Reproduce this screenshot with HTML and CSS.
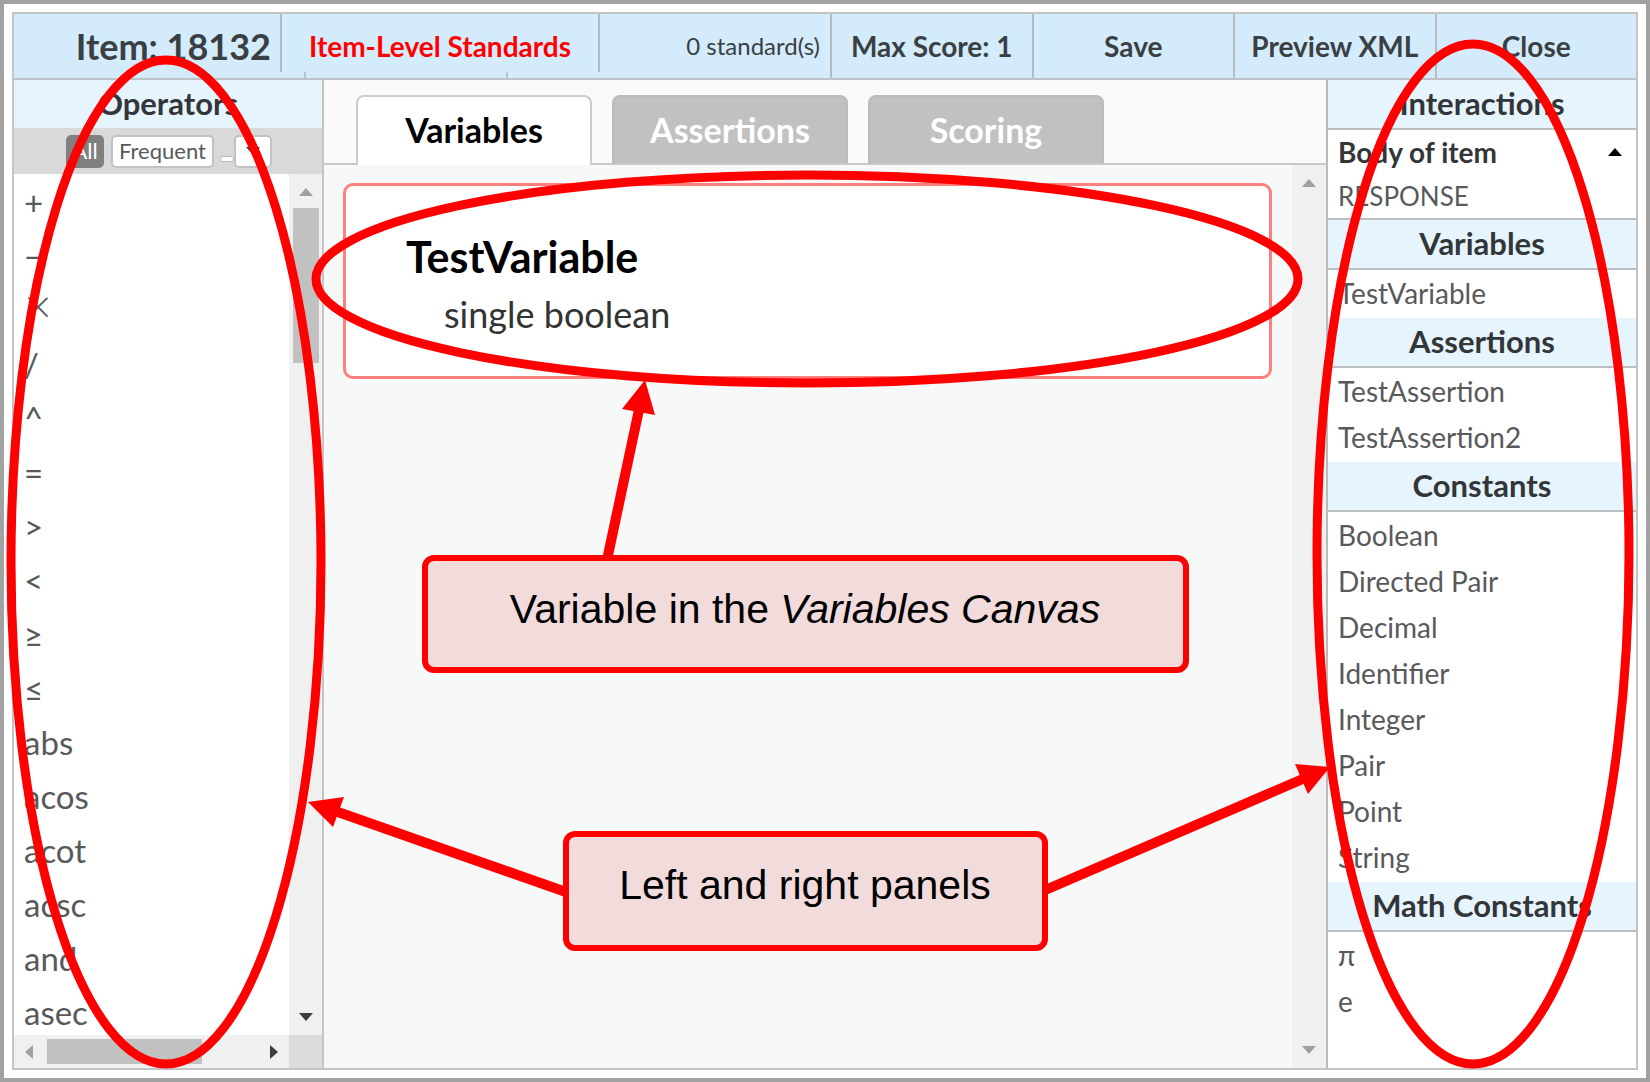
FILE: index.html
```
<!DOCTYPE html>
<html lang="en">
    <head>
        <meta charset="utf-8" />
        <meta name="viewport" content="width=device-width, initial-scale=1" />
        <title>Item: 18132</title>
        <link rel="stylesheet" href="styles.css">
    </head>
    <body>
        <div id="window">
            <div id="app">

                <!-- top bar -->
                <div id="header">
                    <h1 class="cell itemId">Item: 18132</h1>
                    <a class="cell standards" href="#standards">Item-Level Standards</a>
                    <span class="cell count">0 standard(s)</span>
                    <button class="cell" type="button">Max Score: 1</button>
                    <button class="cell" type="button">Save</button>
                    <button class="cell" type="button">Preview XML</button>
                    <button class="cell" type="button">Close</button>
                </div>

                <div id="main">

                    <!-- operators -->
                    <div id="left">
                        <h2 class="panelTitle">Operators</h2>
                        <div class="filters">
                            <button class="filter on" type="button">All</button>
                            <button class="filter frequent" type="button">Frequent</button>
                            <span class="dash"></span>
                            <button class="filter more" type="button" aria-label="more"><i class="arrow down"></i></button>
                        </div>
                        <div class="scroller">
                            <ul class="operators">
                                <li>+</li>
                                <li>−</li>
                                <li class="times">×</li>
                                <li>/</li>
                                <li>^</li>
                                <li>=</li>
                                <li>&gt;</li>
                                <li>&lt;</li>
                                <li>≥</li>
                                <li>≤</li>
                                <li>abs</li>
                                <li>acos</li>
                                <li>acot</li>
                                <li>acsc</li>
                                <li>and</li>
                                <li>asec</li>
                            </ul>
                            <div class="vbar"><i class="arrow up dim"></i><i class="thumb"></i><i class="arrow down"></i></div>
                            <div class="hbar"><i class="arrow left dim"></i><i class="thumb"></i><i class="arrow right"></i></div>
                            <div class="corner"></div>
                        </div>
                    </div>

                    <!-- canvas -->
                    <div id="center">
                        <div class="tabs">
                            <button class="tab on" type="button">Variables</button>
                            <button class="tab" type="button">Assertions</button>
                            <button class="tab" type="button">Scoring</button>
                        </div>
                        <div class="canvas">
                            <div class="canvasBody">
                                <div class="variable">
                                    <h3>TestVariable</h3>
                                    <p>single boolean</p>
                                </div>
                            </div>
                            <div class="vbar"><i class="arrow up dim"></i><i class="arrow down dim"></i></div>
                        </div>
                    </div>

                    <!-- references -->
                    <div id="right">
                        <h2 class="panelTitle ruled">Interactions</h2>
                        <ul class="refs interactions">
                            <li class="group">Body of item <i class="arrow up"></i></li>
                            <li class="response">RESPONSE</li>
                        </ul>
                        <h2 class="panelTitle ruled">Variables</h2>
                        <ul class="refs">
                            <li>TestVariable</li>
                        </ul>
                        <h2 class="panelTitle ruled">Assertions</h2>
                        <ul class="refs">
                            <li>TestAssertion</li>
                            <li>TestAssertion2</li>
                        </ul>
                        <h2 class="panelTitle ruled">Constants</h2>
                        <ul class="refs">
                            <li>Boolean</li>
                            <li>Directed Pair</li>
                            <li>Decimal</li>
                            <li>Identifier</li>
                            <li>Integer</li>
                            <li>Pair</li>
                            <li>Point</li>
                            <li>String</li>
                        </ul>
                        <h2 class="panelTitle ruled">Math Constants</h2>
                        <ul class="refs">
                            <li>π</li>
                            <li>e</li>
                        </ul>
                    </div>
                </div>
            </div>

            <!-- callouts, drawn over everything -->
            <svg id="callouts" viewBox="0 0 1650 1082">
                <g class="ring">
                    <ellipse cx="166" cy="562" rx="155" ry="502" />
                    <ellipse cx="807" cy="279" rx="491" ry="104" />
                    <ellipse cx="1473" cy="554" rx="156" ry="510" />
                </g>
                <g class="stem">
                    <path d="M607 560L640 405" />
                    <path d="M566 892L335 811" />
                    <path d="M1043 891L1305 778" />
                </g>
                <g class="head">
                    <path d="M645 380L622 409L655 415Z" />
                    <path d="M308 802L344 797L333 827Z" />
                    <path d="M1330 767L1295 764L1308 794Z" />
                </g>
                <rect class="box" x="425" y="558" width="761" height="112" rx="9" />
                <text x="805" y="623">Variable in the <tspan class="em">Variables Canvas</tspan></text>
                <rect class="box" x="566" y="834" width="479" height="114" rx="9" />
                <text x="805" y="899">Left and right panels</text>
            </svg>
        </div>
    </body>
</html>
```

FILE: styles.css
```
/* body props */
* {
    box-sizing:         border-box;
}
body {
    margin:             0;
    background-color:   #FFFFFF;
    color:              #58595A;
    font-family:        Lato, "Open Sans", sans-serif;
    font-size:          28px;
}
h1, h2, h3, p, ul {
    margin:             0;
    padding:            0;
}
ul {
    list-style:         none;
}
button {
    margin:             0;
    padding:            0;
    border:             0;
    font:               inherit;
    color:              inherit;
    cursor:             pointer;
}
#window {
    position:           relative;
    display:            flex;
    height:             100vh;
    padding:            8px;
    border:             4px solid #A2A2A2;
}
#app {
    flex:               1;
    display:            flex;
    flex-direction:     column;
    border:             2px solid #C4C4C4;
}

/* top bar */
#header {
    position:           relative;
    flex:               none;
    display:            grid;
    grid-template-columns: 266px 318px 232px repeat(4, 1fr);
    height:             66px;
    background-color:   #D3EBFB;
    border-bottom:      2px solid #BDC3C8;
}
#header::before, #header::after {
    content:            "";
    position:           absolute;
    bottom:             0;
    left:               290px;
    width:              2px;
    height:             6px;
    background-color:   #BDC3C8;
}
#header::after {
    left:               492px;
}
.cell {
    display:            flex;
    align-items:        center;
    justify-content:    center;
    background:         none;
    border-left:        2px solid #B4BCC2;
    color:              #3A3F44;
    font-size:          28px;
    font-weight:        bold;
    line-height:        32px;
    white-space:        nowrap;
}
.itemId {
    justify-content:    flex-end;
    padding-right:      9px;
    border-left:        0;
    font-size:          36px;
}
.standards {
    margin-bottom:      6px;
    padding-top:        6px;
    color:              #FF0000;
    text-decoration:    none;
}
.count {
    justify-content:    flex-end;
    margin-bottom:      6px;
    padding:            6px 10px 0 0;
    font-size:          24px;
    font-weight:        normal;
}

/* columns */
#main {
    flex:               1;
    display:            grid;
    grid-template-columns: 310px 1fr 310px;
    grid-template-rows: minmax(0, 1fr);
    min-height:         0;
}
#left {
    display:            flex;
    flex-direction:     column;
    border-right:       2px solid #C4C4C4;
}
#right {
    border-left:        2px solid #BBBBBB;
}
.panelTitle {
    flex:               none;
    height:             48px;
    background-color:   #E6F4FD;
    color:              #333638;
    font-size:          31px;
    line-height:        46px;
    text-align:         center;
}
.panelTitle.ruled {
    height:             50px;
    border-bottom:      2px solid #BBBFC2;
}

/* operator filters */
.filters {
    flex:               none;
    display:            flex;
    align-items:        center;
    height:             46px;
    padding-left:       52px;
    background-color:   #D9D9D9;
}
.filter {
    height:             33px;
    border:             2px solid #C2C2C2;
    border-radius:      5px;
    background-color:   #FFFFFF;
    font-size:          22px;
    line-height:        28px;
}
.filter.on {
    width:              38px;
    margin-right:       7px;
    border-color:       #808080;
    background-color:   #808080;
    color:              #FFFFFF;
}
.filter.frequent {
    width:              103px;
}
.dash {
    width:              14px;
    height:             6px;
    margin:             16px 0 0 6px;
    border:             1px solid #BBBBBB;
    border-radius:      3px;
    background-color:   #FFFFFF;
}
.filter.more {
    display:            flex;
    align-items:        center;
    justify-content:    center;
    width:              38px;
}

/* scroll bars */
.scroller {
    flex:               1;
    display:            grid;
    grid-template-columns: 1fr 33px;
    grid-template-rows: minmax(0, 1fr) 33px;
    min-height:         0;
}
.vbar, .hbar {
    display:            flex;
    align-items:        center;
    background-color:   #F0F0F0;
}
.vbar {
    flex-direction:     column;
    padding:            14px 0;
}
.hbar {
    padding:            0 11px;
}
.vbar .arrow:last-child {
    margin-top:         auto;
}
.hbar .arrow:last-child {
    margin-left:        auto;
}
.vbar .thumb {
    width:              26px;
    height:             155px;
    margin-top:         12px;
    background-color:   #C1C1C1;
}
.hbar .thumb {
    width:              155px;
    height:             25px;
    margin-left:        14px;
    background-color:   #C1C1C1;
}
.corner {
    background-color:   #DCDCDC;
}
.arrow {
    width:              0;
    height:             0;
    border:             7px solid transparent;
    color:              #3C3C3C;
}
.arrow.dim {
    color:              #A0A0A0;
}
.arrow.up {
    border-top:         0;
    border-bottom:      8px solid;
}
.arrow.down {
    border-bottom:      0;
    border-top:         8px solid;
}
.arrow.left {
    border-left:        0;
    border-right:       8px solid;
}
.arrow.right {
    border-right:       0;
    border-left:        8px solid;
}

.operators {
    overflow:           hidden;
}
.operators li {
    height:             54px;
    padding-left:       10px;
    font-size:          33px;
    line-height:        56px;
}
.operators .times {
    font-size:          48px;
    font-weight:        300;
    line-height:        46px;
}

/* tabs and canvas */
#center {
    display:            flex;
    flex-direction:     column;
    background-color:   #F7F8F8;
}
.tabs {
    display:            flex;
    gap:                20px;
    height:             85px;
    padding:            15px 32px 0;
    background-color:   #FAFAFA;
    border-bottom:      2px solid #C8C8C8;
}
.tab {
    width:              236px;
    height:             68px;
    padding-bottom:     2px;
    border:             2px solid #BBBBBB;
    border-bottom:      0;
    border-radius:      8px 8px 0 0;
    background-color:   #C1C1C1;
    color:              #FFFFFF;
    font-size:          34px;
    font-weight:        bold;
}
.tab.on {
    height:             70px;
    padding-bottom:     4px;
    border-color:       #CCCCCC;
    background-color:   #FFFFFF;
    color:              #000000;
}
.canvas {
    flex:               1;
    display:            flex;
}
.canvasBody {
    flex:               1;
    padding:            18px 20px 0 19px;
}
.canvas .vbar {
    width:              34px;
}
.variable {
    height:             196px;
    padding:            48px 60px;
    border:             3px solid #FF7F7F;
    border-radius:      10px;
    background-color:   #FFFFFF;
}
.variable h3 {
    color:              #000000;
    font-size:          43px;
    line-height:        46px;
}
.variable p {
    padding:            14px 0 0 38px;
    color:              #333333;
    font-size:          36px;
    line-height:        40px;
}

/* right panel */
.refs {
    padding-bottom:     2px;
}
.refs li {
    height:             46px;
    padding-left:       10px;
    line-height:        46px;
}
.refs.interactions {
    padding:            0;
    border-bottom:      2px solid #BBBFC2;
}
.interactions li {
    height:             44px;
    line-height:        44px;
}
.refs .response {
    font-size:          26px;
}
.refs .group {
    display:            flex;
    align-items:        center;
    justify-content:    space-between;
    padding-right:      14px;
    color:              #333638;
    font-weight:        bold;
}
.group .arrow {
    color:              #000000;
}

/* callouts */
#callouts {
    position:           absolute;
    top:                -4px;
    left:               -4px;
    width:              calc(100% + 8px);
    height:             calc(100% + 8px);
    pointer-events:     none;
}
.ring {
    fill:               none;
    stroke:             #FF0000;
    stroke-width:       9px;
}
.stem {
    stroke:             #FF0000;
    stroke-width:       10px;
}
.head {
    fill:               #FF0000;
}
.box {
    fill:               #F2DCDB;
    stroke:             #FF0000;
    stroke-width:       6px;
}
#callouts text {
    fill:               #000000;
    font-family:        "Liberation Sans", Arial, sans-serif;
    font-size:          41px;
    text-anchor:        middle;
}
.em {
    font-style:         italic;
}
```
